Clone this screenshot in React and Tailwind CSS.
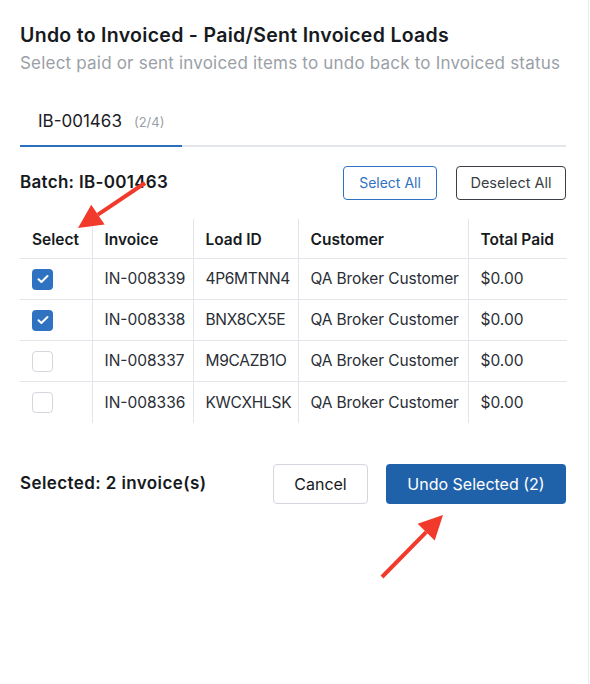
import React, { useState } from 'react';

const rows = [
    { invoice: 'IN-008339', load: '4P6MTNN4', customer: 'QA Broker Customer', total: '$0.00' },
    { invoice: 'IN-008338', load: 'BNX8CX5E', customer: 'QA Broker Customer', total: '$0.00' },
    { invoice: 'IN-008337', load: 'M9CAZB1O', customer: 'QA Broker Customer', total: '$0.00' },
    { invoice: 'IN-008336', load: 'KWCXHLSK', customer: 'QA Broker Customer', total: '$0.00' },
];

const Check = ({ checked, onClick }) => (
    <button
        onClick={onClick}
        className={
            'w-[21px] h-[21px] rounded-[4px] flex items-center justify-center ' +
            (checked ? 'bg-[#2f72c2]' : 'bg-white border border-[#d4d7dd]')
        }
    >
        {checked && (
            <svg width="12" height="10" viewBox="0 0 12 10" fill="none">
                <path d="M1.5 5.2 4.4 8 10.5 2" stroke="white" strokeWidth="2" strokeLinecap="round" strokeLinejoin="round" />
            </svg>
        )}
    </button>
);

const Arrow = ({ x1, y1, x2, y2 }) => {
    const ang = Math.atan2(y2 - y1, x2 - x1);
    const len = 24;
    const bx = x2 - len * Math.cos(ang);
    const by = y2 - len * Math.sin(ang);
    const p1 = [bx + 12 * Math.cos(ang + Math.PI / 2), by + 12 * Math.sin(ang + Math.PI / 2)];
    const p2 = [bx - 12 * Math.cos(ang + Math.PI / 2), by - 12 * Math.sin(ang + Math.PI / 2)];
    return (
        <g>
            <line x1={x1} y1={y1} x2={bx} y2={by} stroke="#f23a2c" strokeWidth="4" />
            <polygon points={`${x2},${y2} ${p1[0]},${p1[1]} ${p2[0]},${p2[1]}`} fill="#f23a2c" />
        </g>
    );
};

const th = 'px-3 font-semibold text-[15.5px] text-[#161a20] whitespace-nowrap';
const td = 'px-3 text-[15.5px] text-[#2a2e35] whitespace-nowrap border-l border-[#e2e5e9]';

const App = () => {
    const [sel, setSel] = useState([true, true, false, false]);
    const count = sel.filter(Boolean).length;
    const toggle = (i) => setSel(sel.map((v, j) => (j === i ? !v : v)));

    return (
        <div
            className="relative w-[590px] h-[684px] bg-white overflow-hidden"
            style={{ fontFamily: 'Inter, "Noto Sans", sans-serif' }}
        >
            <div className="w-[589px] h-full border-r border-[#eceef1] pl-5 pr-[22px] pt-[22px]">
                <h1 className="text-[19.5px] leading-[26px] font-semibold text-[#161a20] tracking-[0.3px] whitespace-nowrap">
                    Undo to Invoiced - Paid/Sent Invoiced Loads
                </h1>
                <p className="mt-[2px] text-[17px] leading-[26px] text-[#9a9fa7] tracking-[0.2px] whitespace-nowrap">
                    Select paid or sent invoiced items to undo back to Invoiced status
                </p>

                <div className="mt-[33px] flex border-b-2 border-[#e2e5e9]">
                    <div className="w-[162px] -mb-[2px] border-b-2 border-[#2a6fc0] pl-[18px] pb-[10px] flex items-baseline">
                        <span className="text-[17px] text-[#1c2026]">IB-001463</span>
                        <span className="ml-3 text-[13px] text-[#9a9fa7]">(2/4)</span>
                    </div>
                </div>

                <div className="mt-[19px] flex items-center justify-between">
                    <span className="text-[17px] font-semibold text-[#161a20] tracking-[0.3px]">Batch: IB-001463</span>
                    <div className="flex gap-[19px]">
                        <button
                            onClick={() => setSel([true, true, true, true])}
                            className="h-[34px] w-[94px] rounded-[4px] border border-[#2f72c2] text-[#2f72c2] text-[14px]"
                        >
                            Select All
                        </button>
                        <button
                            onClick={() => setSel([false, false, false, false])}
                            className="h-[34px] w-[110px] rounded-[4px] border border-[#3a3f46] text-[#3a3f46] text-[14.5px]"
                        >
                            Deselect All
                        </button>
                    </div>
                </div>

                <table className="mt-[19px] w-[547px] table-fixed border-collapse text-left">
                    <colgroup>
                        <col className="w-[72px]" />
                        <col className="w-[101px]" />
                        <col className="w-[105px]" />
                        <col className="w-[170px]" />
                        <col className="w-[99px]" />
                    </colgroup>
                    <thead>
                        <tr className="h-[40px] border-b border-[#e2e5e9]">
                            <th className={th + ' pt-[2px]'}>Select</th>
                            <th className={th + ' pt-[2px] border-l border-[#e2e5e9]'}>Invoice</th>
                            <th className={th + ' pt-[2px] border-l border-[#e2e5e9]'}>Load ID</th>
                            <th className={th + ' pt-[2px] border-l border-[#e2e5e9]'}>Customer</th>
                            <th className={th + ' pt-[2px] border-l border-[#e2e5e9]'}>Total Paid</th>
                        </tr>
                    </thead>
                    <tbody>
                        {rows.map((r, i) => (
                            <tr key={r.invoice} className={'h-[41px] ' + (i < rows.length - 1 ? 'border-b border-[#e2e5e9]' : '')}>
                                <td className="px-3">
                                    <Check checked={sel[i]} onClick={() => toggle(i)} />
                                </td>
                                <td className={td}>{r.invoice}</td>
                                <td className={td + ' tracking-[-0.3px]'}>{r.load}</td>
                                <td className={td + ' tracking-[-0.1px]'}>{r.customer}</td>
                                <td className={td}>{r.total}</td>
                            </tr>
                        ))}
                    </tbody>
                </table>

                <div className="mt-[41px] flex items-center justify-between">
                    <span className="text-[17px] font-semibold text-[#161a20] tracking-[0.4px]">Selected: {count} invoice(s)</span>
                    <div className="flex gap-[18px]">
                        <button className="h-[40px] w-[95px] rounded-[4px] border border-[#d4d7dd] text-[16px] text-[#161a20]">
                            Cancel
                        </button>
                        <button className="h-[40px] w-[180px] rounded-[4px] bg-[#2062aa] text-white text-[16px]">
                            Undo Selected ({count})
                        </button>
                    </div>
                </div>
            </div>

            <svg className="absolute inset-0 pointer-events-none" width="590" height="684">
                <Arrow x1={145} y1={183} x2={78} y2={228} />
                <Arrow x1={382} y1={577} x2={443} y2={515} />
            </svg>
        </div>
    );
};

export default App;
